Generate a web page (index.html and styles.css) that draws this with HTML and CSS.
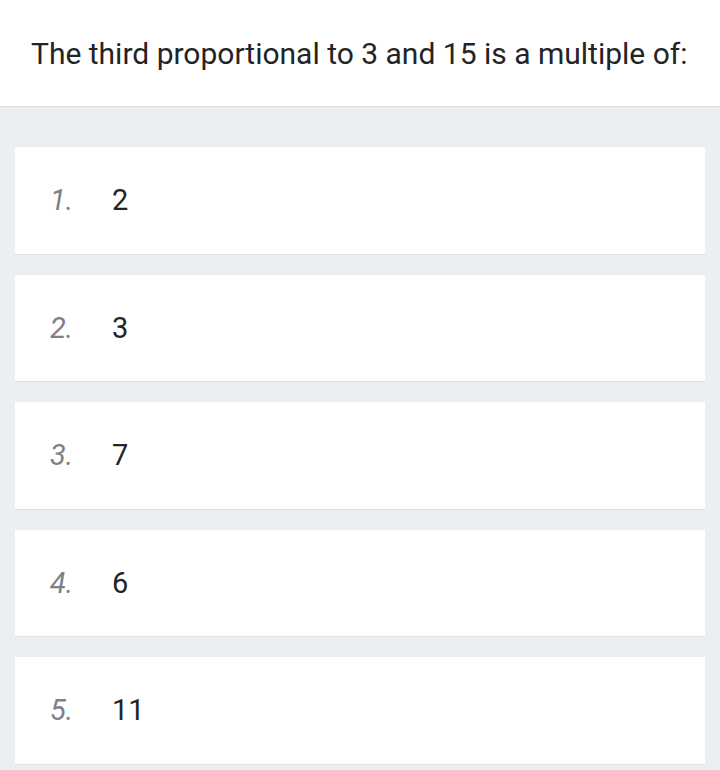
FILE: index.html
```html
<!DOCTYPE html>
<html>
<head>
<meta charset="utf-8">
<link rel="stylesheet" href="styles.css">
</head>
<body>
<div class="page">
  <header class="question">The third proportional to 3 and 15 is a multiple of:</header>
  <ol class="options">
    <li class="option"><span class="num">1.</span><span class="val">2</span></li>
    <li class="option"><span class="num">2.</span><span class="val">3</span></li>
    <li class="option"><span class="num">3.</span><span class="val">7</span></li>
    <li class="option"><span class="num">4.</span><span class="val">6</span></li>
    <li class="option"><span class="num">5.</span><span class="val">11</span></li>
  </ol>
</div>
</body>
</html>
```
FILE: styles.css
```css
html, body {
  margin: 0;
  padding: 0;
  background: #eceff2;
  font-family: Roboto, "Liberation Sans", sans-serif;
}
.page {
  width: 720px;
  height: 770px;
  overflow: hidden;
}
.question {
  background: #ffffff;
  height: 106px;
  border-bottom: 1px solid #dcdfe3;
  box-sizing: content-box;
  padding-left: 31px;
  font-size: 30px;
  line-height: 108px;
  color: #222426;
}
.options {
  list-style: none;
  margin: 0;
  padding: 40px 15px 0 15px;
  display: flex;
  flex-direction: column;
  gap: 20px;
}
.option {
  background: #ffffff;
  height: 106.5px;
  border-bottom: 1px solid #dde1e5;
  display: flex;
  align-items: center;
  padding-left: 35px;
  font-size: 29px;
}
.num {
  width: 62px;
  color: #7b8188;
  font-style: italic;
}
.val {
  color: #222426;
}
```
